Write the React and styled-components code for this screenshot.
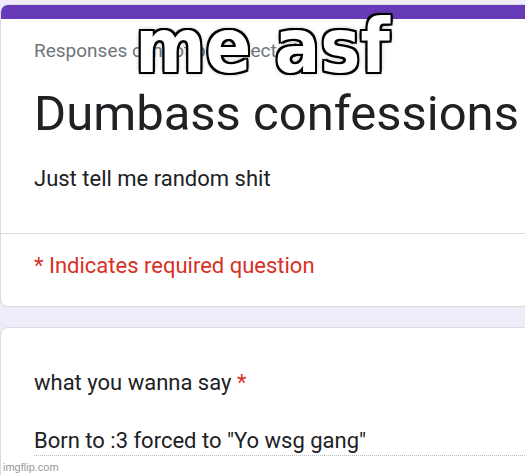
import React from 'react'
import styled, { createGlobalStyle } from 'styled-components'

const GlobalStyle = createGlobalStyle`
  html, body {
    margin: 0;
    padding: 0;
    background: #f0ebf8;
    overflow: hidden;
  }
`

function App() {
    return (
        <Page>
            <GlobalStyle />
            <Card>
                <TopBand />
                <Header>
                    <Notice>Responses cannot be collected</Notice>
                    <Title>Dumbass confessions</Title>
                    <Description>Just tell me random shit</Description>
                </Header>
                <Divider />
                <Required>* Indicates required question</Required>
            </Card>

            <QuestionCard>
                <Question>
                    what you wanna say <Star>*</Star>
                </Question>
                <Answer>Born to :3 forced to "Yo wsg gang"</Answer>
            </QuestionCard>

            <Caption>me asf</Caption>
            <Watermark>imgflip.com</Watermark>
        </Page>
    )
}

export default App

const Page = styled.div`
    position: relative;
    width: 525px;
    height: 475px;
    overflow: hidden;
    background: #f0ebf8;
    font-family: Roboto, "Liberation Sans", sans-serif;
    padding-top: 4px;
    box-sizing: border-box;
`

const Card = styled.div`
    width: 560px;
    background: #fff;
    border: 1px solid #dadce0;
    border-radius: 8px;
    overflow: hidden;
    box-sizing: border-box;
`

const TopBand = styled.div`
    height: 14px;
    background: #673ab7;
`

const Header = styled.div`
    padding: 20px 0 0 33px;
`

const Notice = styled.div`
    font-size: 19px;
    line-height: 24px;
    color: #70757a;
`

const Title = styled.div`
    margin-top: 23px;
    font-size: 49px;
    line-height: 56px;
    color: #202124;
    white-space: nowrap;
`

const Description = styled.div`
    margin-top: 23px;
    font-size: 22px;
    line-height: 28px;
    color: #202124;
`

const Divider = styled.div`
    margin-top: 40px;
    height: 1px;
    background: #dadce0;
`

const Required = styled.div`
    padding: 18px 0 26px 33px;
    font-size: 22px;
    line-height: 28px;
    color: #d93025;
`

const QuestionCard = styled(Card)`
    margin-top: 20px;
    padding: 41px 0 40px 33px;
`

const Question = styled.div`
    font-size: 22px;
    line-height: 28px;
    color: #202124;
`

const Star = styled.span`
    color: #d93025;
`

const Answer = styled.div`
    margin-top: 30px;
    font-size: 22px;
    line-height: 28px;
    color: #202124;
    border-bottom: 1px dotted #bdbdbd;
`

const Caption = styled.div`
    position: absolute;
    top: 3px;
    left: 0;
    right: 0;
    text-align: center;
    font-family: Impact, "DejaVu Sans Condensed", "Liberation Sans", sans-serif;
    font-weight: bold;
    font-size: 75px;
    line-height: 86px;
    color: #fff;
    text-shadow:
        2px 0 0 #000, -2px 0 0 #000, 0 2px 0 #000, 0 -2px 0 #000,
        2px 2px 0 #000, -2px 2px 0 #000, 2px -2px 0 #000, -2px -2px 0 #000,
        0 0 5px rgba(0,0,0,0.7);
`

const Watermark = styled.div`
    position: absolute;
    left: 3px;
    bottom: 2px;
    font-family: "Liberation Sans", Arial, sans-serif;
    font-size: 11px;
    color: #9a9a9a;
`
